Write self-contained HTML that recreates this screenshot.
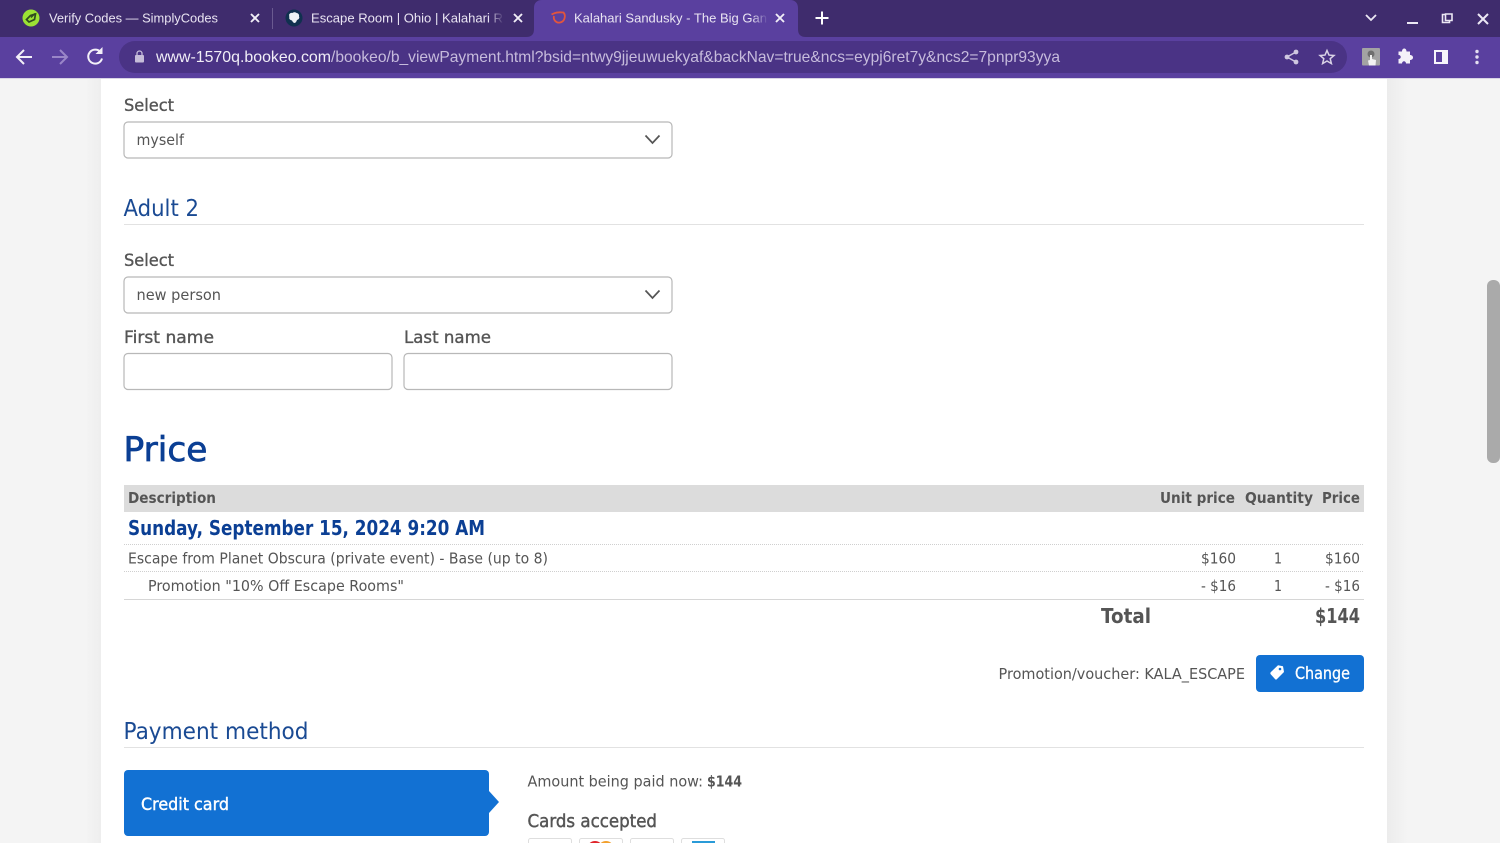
<!DOCTYPE html>
<html><head><meta charset="utf-8"><style>
html,body{margin:0;padding:0;width:1500px;height:843px;overflow:hidden;background:#f4f4f4}
svg{display:block}
.r{font-family:"Liberation Sans",sans-serif}
.o{font-family:"DejaVu Sans",sans-serif;fill:#555}
.b{font-weight:bold}
.m{stroke:#555;stroke-width:.35}
</style></head><body>
<svg width="1500" height="843" viewBox="0 0 1500 843" xmlns="http://www.w3.org/2000/svg">
<defs>
<linearGradient id="sl" x1="0" x2="1"><stop offset="0" stop-color="#f4f4f4"/><stop offset="1" stop-color="#eeeeee"/></linearGradient>
<linearGradient id="sr" x1="0" x2="1"><stop offset="0" stop-color="#ececec"/><stop offset="1" stop-color="#f4f4f4"/></linearGradient>
<linearGradient id="f1" x1="0" x2="1"><stop offset="0" stop-color="#3f2c6d" stop-opacity="0"/><stop offset="1" stop-color="#3f2c6d"/></linearGradient>
<linearGradient id="f2" x1="0" x2="1"><stop offset="0" stop-color="#5a409f" stop-opacity="0"/><stop offset="1" stop-color="#5a409f"/></linearGradient>
</defs>
<!-- page -->
<rect width="1500" height="843" fill="#f4f4f4"/>
<rect x="85" y="78" width="16" height="765" fill="url(#sl)"/>
<rect x="1387" y="78" width="21" height="765" fill="url(#sr)"/>
<rect x="101" y="78" width="1286" height="765" fill="#fff"/>
<!-- scrollbar -->
<rect x="1487" y="280" width="13" height="183" rx="6" fill="#aaaaaa"/>

<!-- chrome -->
<rect width="1500" height="38" fill="#3f2c6d"/>
<rect y="37" width="1500" height="41" fill="#5a409f"/>
<rect y="78" width="1500" height="1" fill="#d9d4e6"/>
<rect x="119" y="41" width="1228" height="32" rx="16" fill="#4a3385"/>
<!-- active tab -->
<path d="M526 37c6 0 8-3 8-8V8c0-5 3-8 8-8h248c5 0 8 3 8 8v21c0 5 2 8 8 8z" fill="#5a409f"/>
<line x1="272.500" y1="8" x2="272.500" y2="29" stroke="#6a5a90" stroke-width="1"/>

<!-- favicons -->
<circle cx="31" cy="18" r="8.500" fill="#9be234"/>
<path d="M26.500 19.500l2.500 2.500 5.500-2.500 1-5.500-5 1.500z" fill="none" stroke="#2f4a20" stroke-width="1.700"/>
<path d="M31 17.500l4-4" stroke="#2f4a20" stroke-width="1.300"/>
<circle cx="294" cy="18" r="8.500" fill="#10304f"/>
<path d="M289 15.500c0-2 2-3 3.500-2.500 1-1 3-1 4 0 2 0 3 2 2.500 3.500 1 1.500-.5 3-2 3.500-.5 1.500-1.500 3-2.500 3-1 0-2-1.500-2.500-2.500-2-.5-3.500-2-2.500-3.500-.5-.5-.5-1 0-1.500z" fill="#eef2f6"/>
<path d="M551.500 14.500c4-2 6-2.500 12-2 2.500 3 1.500 9-3.500 10-4 .8-7-3-6-6.500" fill="none" stroke="#e2553c" stroke-width="1.800"/>

<!-- tab text -->
<g class="r" font-size="13" fill="#e9e4f2">
<text x="49" y="22.500" textLength="169" lengthAdjust="spacingAndGlyphs">Verify Codes — SimplyCodes</text>
<text x="311" y="22.500" textLength="192" lengthAdjust="spacingAndGlyphs">Escape Room | Ohio | Kalahari R</text>
<text x="574" y="22.500" textLength="193" lengthAdjust="spacingAndGlyphs">Kalahari Sandusky - The Big Gan</text>
</g>
<rect x="488" y="8" width="16" height="20" fill="url(#f1)"/>
<rect x="752" y="8" width="16" height="20" fill="url(#f2)"/>
<!-- tab close -->
<g stroke="#f1eef7" stroke-width="1.900" fill="none">
<path d="M251 14l8 8M259 14l-8 8"/>
<path d="M514 14l8 8M522 14l-8 8"/>
<path d="M776 14l8 8M784 14l-8 8"/>
</g>
<path d="M822 11.500v13M815.500 18h13" stroke="#fff" stroke-width="2" fill="none"/>
<!-- window controls -->
<path d="M1366 15l5 5 5-5" stroke="#ece8f4" stroke-width="1.800" fill="none"/>
<path d="M1407 23h11" stroke="#ece8f4" stroke-width="2" fill="none"/>
<path d="M1445 14.500h-2.500v8h7v-2.500M1445.500 14h6.500v6.500h-6.500z" stroke="#ece8f4" stroke-width="1.600" fill="none"/>
<path d="M1478 14l10 10M1488 14l-10 10" stroke="#ece8f4" stroke-width="2" fill="none"/>

<!-- nav icons -->
<path d="M32 57H18M24 50l-7 7 7 7" stroke="#f3f0f8" stroke-width="2" fill="none"/>
<path d="M52 57h14M60 50l7 7-7 7" stroke="#9a86c8" stroke-width="2" fill="none"/>
<path d="M101 52a7 7 0 1 0 1.500 6.500" stroke="#f3f0f8" stroke-width="2" fill="none" transform="translate(-.5 0)"/>
<path d="M95.500 54h7v-7z" fill="#f3f0f8"/>
<!-- lock -->
<rect x="135" y="55" width="9" height="7.500" rx="1" fill="#c6bdd9"/>
<path d="M137 55.500v-2a2.500 2.500 0 0 1 5 0v2" stroke="#c6bdd9" stroke-width="1.300" fill="none"/>
<!-- URL -->
<text class="r" x="156" y="62" font-size="16" fill="#f1eef7" textLength="175" lengthAdjust="spacingAndGlyphs">www-1570q.bookeo.com</text>
<text class="r" x="331" y="62" font-size="16" fill="#c6bbdc" textLength="729" lengthAdjust="spacingAndGlyphs">/bookeo/b_viewPayment.html?bsid=ntwy9jjeuwuekyaf&amp;backNav=true&amp;ncs=eypj6ret7y&amp;ncs2=7pnpr93yya</text>
<!-- share, star -->
<g stroke="#cfc7e0" stroke-width="1.500" fill="none">
<path d="M1296 52l-9 5 9 5"/>
</g>
<g fill="#cfc7e0"><circle cx="1296" cy="52" r="2.400"/><circle cx="1287" cy="57" r="2.400"/><circle cx="1296" cy="62" r="2.400"/></g>
<path d="M1327 50.500l2 4.600 5 .4-3.800 3.200 1.200 4.900-4.400-2.600-4.400 2.600 1.200-4.900-3.800-3.200 5-.4z" stroke="#d9d2e6" stroke-width="1.500" fill="none"/>
<!-- extension icons -->
<rect x="1362" y="48" width="18" height="17.500" rx="1" fill="#a3a3a3"/>
<circle cx="1371" cy="54" r="3.500" fill="#6f6f6f"/>
<path d="M1369 65.500l-1-5 2-.5v-5h2v4l4 1-.5 5.500z" fill="#f2f2f2"/>
<path d="M1399 54h3.500c0-4 4.500-4 4.500 0h3.500v3.500c4 0 4 5 0 5v3.500h-4c0-3-4-3-4 0h-3.500v-4.500c3 0 3-4 0-4z" fill="#f4f1f9" transform="translate(-.5 -2.500)"/>
<rect x="1434" y="50" width="14" height="14" fill="#f7f5fb"/>
<rect x="1436" y="52" width="6" height="10" fill="#5a409f"/>
<g fill="#e4dff0"><circle cx="1477" cy="51.500" r="1.700"/><circle cx="1477" cy="57" r="1.700"/><circle cx="1477" cy="62.500" r="1.700"/></g>

<!-- form -->
<text class="o m" x="124" y="111" font-size="16.500" textLength="50" lengthAdjust="spacingAndGlyphs">Select</text>
<rect x="124" y="122" width="548" height="36" rx="4" fill="#fff" stroke="#b8b8b8" stroke-width="1.200"/>
<text class="o" x="136.500" y="145" font-size="15.500" textLength="47.500" lengthAdjust="spacingAndGlyphs">myself</text>
<path d="M645.500 135.500l7 7.500 7-7.500" stroke="#555" stroke-width="1.700" fill="none"/>

<text class="o" x="123.500" y="216" font-size="23.500" style="fill:#1a4a93" textLength="75.500" lengthAdjust="spacingAndGlyphs">Adult 2</text>
<rect x="124" y="224" width="1240" height="1" fill="#e2e2e2"/>

<text class="o m" x="124" y="266" font-size="16.500" textLength="50" lengthAdjust="spacingAndGlyphs">Select</text>
<rect x="124" y="277" width="548" height="36" rx="4" fill="#fff" stroke="#b8b8b8" stroke-width="1.200"/>
<text class="o" x="136.500" y="300" font-size="15.500" textLength="84.500" lengthAdjust="spacingAndGlyphs">new person</text>
<path d="M645.500 290.500l7 7.500 7-7.500" stroke="#555" stroke-width="1.700" fill="none"/>

<text class="o m" x="124" y="343" font-size="16.500" textLength="90" lengthAdjust="spacingAndGlyphs">First name</text>
<text class="o m" x="404" y="343" font-size="16.500" textLength="87" lengthAdjust="spacingAndGlyphs">Last name</text>
<rect x="124" y="353.500" width="268" height="36" rx="4" fill="#fff" stroke="#b8b8b8" stroke-width="1.200"/>
<rect x="404" y="353.500" width="268" height="36" rx="4" fill="#fff" stroke="#b8b8b8" stroke-width="1.200"/>

<!-- price -->
<text class="o" x="123.500" y="461" font-size="34" style="fill:#0b3f94" font-weight="500" textLength="84" lengthAdjust="spacingAndGlyphs" stroke="#0b3f94" stroke-width=".7">Price</text>
<rect x="124" y="485" width="1240" height="27" fill="#dcdcdc"/>
<g>
<text class="o b" x="128" y="503" font-size="15.500" textLength="88" lengthAdjust="spacingAndGlyphs">Description</text>
<text class="o b" x="1160" y="503" font-size="15.500" textLength="75" lengthAdjust="spacingAndGlyphs">Unit price</text>
<text class="o b" x="1245" y="503" font-size="15.500" textLength="68" lengthAdjust="spacingAndGlyphs">Quantity</text>
<text class="o b" x="1322" y="503" font-size="15.500" textLength="38" lengthAdjust="spacingAndGlyphs">Price</text>
</g>
<text class="o b" x="128" y="535" font-size="20" style="fill:#0b3f94" textLength="357" lengthAdjust="spacingAndGlyphs">Sunday, September 15, 2024 9:20 AM</text>
<line x1="124" y1="544.500" x2="1364" y2="544.500" stroke="#cfcfcf" stroke-dasharray="1 1"/>
<text class="o" x="128" y="563.500" font-size="15.500" textLength="420" lengthAdjust="spacingAndGlyphs">Escape from Planet Obscura (private event) - Base (up to 8)</text>
<text class="o" x="1201" y="563.500" font-size="15.500" textLength="35" lengthAdjust="spacingAndGlyphs">$160</text>
<text class="o" x="1274" y="563.500" font-size="15.500" textLength="8" lengthAdjust="spacingAndGlyphs">1</text>
<text class="o" x="1325" y="563.500" font-size="15.500" textLength="35" lengthAdjust="spacingAndGlyphs">$160</text>
<line x1="124" y1="571.500" x2="1364" y2="571.500" stroke="#cfcfcf" stroke-dasharray="1 1"/>
<text class="o" x="148" y="591" font-size="15.500" textLength="256" lengthAdjust="spacingAndGlyphs">Promotion "10% Off Escape Rooms"</text>
<text class="o" x="1201" y="591" font-size="15.500" textLength="35" lengthAdjust="spacingAndGlyphs">- $16</text>
<text class="o" x="1274" y="591" font-size="15.500" textLength="8" lengthAdjust="spacingAndGlyphs">1</text>
<text class="o" x="1325" y="591" font-size="15.500" textLength="35" lengthAdjust="spacingAndGlyphs">- $16</text>
<rect x="124" y="599" width="1240" height="1" fill="#d6d6d6"/>
<text class="o b" x="1101" y="623" font-size="20" textLength="50" lengthAdjust="spacingAndGlyphs">Total</text>
<text class="o b" x="1315" y="623" font-size="20" textLength="45" lengthAdjust="spacingAndGlyphs">$144</text>

<text class="o" x="998.500" y="679" font-size="15.500" textLength="246.500" lengthAdjust="spacingAndGlyphs">Promotion/voucher: KALA_ESCAPE</text>
<rect x="1256" y="655" width="108" height="37" rx="4" fill="#1271d3"/>
<path d="M1270.700 672.300L1278 665.300 1283 666.300 1284 672 1276.800 679.300Q1276 680 1275.200 679.300L1270.700 674.300Q1270 673.300 1270.700 672.300z" fill="#fff"/>
<circle cx="1280" cy="669" r="1.300" fill="#1271d3"/>
<text class="o" x="1295" y="679" font-size="16.500" style="fill:#fff" textLength="55" lengthAdjust="spacingAndGlyphs" stroke="#fff" stroke-width=".3">Change</text>

<text class="o" x="123.500" y="739" font-size="23.500" style="fill:#1a4a93" textLength="185" lengthAdjust="spacingAndGlyphs">Payment method</text>
<rect x="124" y="747" width="1240" height="1" fill="#e2e2e2"/>

<rect x="124" y="770" width="365" height="66" rx="4" fill="#1271d3"/>
<path d="M489 791l10 11-10 11z" fill="#1271d3"/>
<text class="o" x="141" y="810" font-size="16.500" style="fill:#fff" textLength="88" lengthAdjust="spacingAndGlyphs" stroke="#fff" stroke-width=".4">Credit card</text>

<text class="o" x="527.500" y="786.500" font-size="15.500" textLength="175.500" lengthAdjust="spacingAndGlyphs">Amount being paid now:</text>
<text class="o b" x="707" y="786.500" font-size="15.500" textLength="35" lengthAdjust="spacingAndGlyphs">$144</text>
<text class="o" x="527.500" y="827" font-size="18" textLength="129.500" lengthAdjust="spacingAndGlyphs" stroke="#555" stroke-width=".45">Cards accepted</text>
<!-- cards -->
<g fill="#fff" stroke="#dedede">
<rect x="528.500" y="838.500" width="43" height="20" rx="2"/>
<rect x="579.500" y="838.500" width="43" height="20" rx="2"/>
<rect x="630.500" y="838.500" width="43" height="20" rx="2"/>
<rect x="681.500" y="838.500" width="43" height="20" rx="2"/>
</g>
<circle cx="595" cy="849" r="8" fill="#e0262b"/>
<circle cx="606" cy="849" r="8" fill="#f2a02d"/>
<rect x="692" y="841" width="23" height="4" fill="#2a9bd8"/>
</svg>
</body></html>
